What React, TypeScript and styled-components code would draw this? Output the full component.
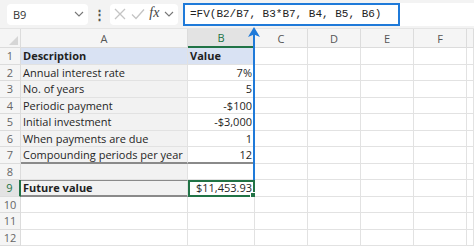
import React from 'react';
import styled, { createGlobalStyle } from 'styled-components';

const GlobalStyle = createGlobalStyle`
  html, body {
    margin: 0;
    padding: 0;
    background: #ffffff;
    width: 474px;
    height: 247px;
    overflow: hidden;
  }
`;

const columns = ['A', 'B', 'C', 'D', 'E', 'F', ''];

interface RowData {
  label: string;
  value: string;
}

const rows: RowData[] = [
  { label: 'Description', value: 'Value' },
  { label: 'Annual interest rate', value: '7%' },
  { label: 'No. of years', value: '5' },
  { label: 'Periodic payment', value: '-$100' },
  { label: 'Initial investment', value: '-$3,000' },
  { label: 'When payments are due', value: '1' },
  { label: 'Compounding periods per year', value: '12' },
  { label: '', value: '' },
  { label: 'Future value', value: '$11,453.93' },
  { label: '', value: '' },
  { label: '', value: '' },
  { label: '', value: '' },
];

const App: React.FC = () => {
  return (
    <Page>
      <GlobalStyle />
      <Toolbar>
        <NameBox>
          <span>B9</span>
          <Chevron />
        </NameBox>
        <Dots>⋮</Dots>
        <FuncBox>
          <svg width="12" height="12" viewBox="0 0 12 12">
            <path d="M1 1 L11 11 M11 1 L1 11" stroke="#c4c4c4" strokeWidth="1.3" fill="none" />
          </svg>
          <svg width="14" height="12" viewBox="0 0 14 12">
            <path d="M1 6.5 L5 10.5 L13 1.5" stroke="#c4c4c4" strokeWidth="1.3" fill="none" />
          </svg>
          <Fx>fx</Fx>
          <Chevron />
        </FuncBox>
        <FormulaArea>
          <FormulaBox>=FV(B2/B7, B3*B7, B4, B5, B6)</FormulaBox>
        </FormulaArea>
      </Toolbar>
      <Sheet>
        <Corner>
          <CornerMark />
        </Corner>
        {columns.map((c, i) => (
          <ColHeader key={i} selected={c === 'B'}>
            {c}
          </ColHeader>
        ))}
        {rows.map((r, i) => {
          const n = i + 1;
          const head = n === 1;
          const shaded = n >= 2 && n <= 9;
          const bottomRule = n === 7 || n === 9;
          const topRule = n === 9;
          return (
            <React.Fragment key={n}>
              <RowHeader selected={n === 9}>{n}</RowHeader>
              <Cell
                tone={head ? 'head' : shaded ? 'shade' : 'plain'}
                bold={head || n === 9}
                bottomRule={bottomRule}
                topRule={topRule}
              >
                {r.label}
              </Cell>
              <Cell
                tone={head ? 'head' : 'plain'}
                bold={head}
                alignRight={!head}
                bottomRule={bottomRule}
                topRule={topRule}
                active={n === 9}
              >
                {r.value}
                {n === 9 && <FillHandle />}
              </Cell>
              {columns.slice(2).map((c, k) => (
                <Cell key={k} tone="plain" />
              ))}
            </React.Fragment>
          );
        })}
        <Pointer>
          <svg width="12" height="10" viewBox="0 0 12 10">
            <path d="M6 0 L12 10 L6 7.5 L0 10 Z" fill="#1f7ad9" />
          </svg>
          <PointerLine />
        </Pointer>
      </Sheet>
    </Page>
  );
};

export default App;

const Chevron: React.FC = () => (
  <svg width="10" height="6" viewBox="0 0 10 6">
    <path d="M1 1 L5 5 L9 1" stroke="#777" strokeWidth="1.1" fill="none" />
  </svg>
);

const Page = styled.div`
  width: 474px;
  height: 247px;
  position: relative;
  overflow: hidden;
  font-family: 'Open Sans', 'Noto Sans', sans-serif;
  color: #1f1f1f;
`;

const Toolbar = styled.div`
  height: 29px;
  background: #f3f3f3;
  display: flex;
  align-items: center;
  padding-left: 7px;
  box-sizing: border-box;
  border-bottom: 1px solid #e4e4e4;
`;

const NameBox = styled.div`
  width: 81px;
  height: 21px;
  background: #fff;
  border-radius: 4px;
  display: flex;
  align-items: center;
  justify-content: space-between;
  padding: 0 4px 0 6px;
  box-sizing: border-box;
  font-size: 11px;
  color: #333;
`;

const Dots = styled.div`
  width: 22px;
  text-align: center;
  font-size: 13px;
  color: #555;
  font-weight: bold;
`;

const FuncBox = styled.div`
  width: 68px;
  height: 21px;
  background: #fff;
  border-radius: 4px;
  display: flex;
  align-items: center;
  justify-content: space-between;
  padding: 0 4px 0 4px;
  box-sizing: border-box;
`;

const Fx = styled.span`
  font-family: 'Liberation Serif', serif;
  font-style: italic;
  font-size: 14px;
  color: #444;
  margin-top: -2px;
`;

const FormulaArea = styled.div`
  flex: 1;
  margin-left: 5px;
  height: 23px;
  background: #fff;
  display: flex;
`;

const FormulaBox = styled.div`
  width: 217px;
  height: 23px;
  box-sizing: border-box;
  border: 2px solid #1f7ad9;
  font-family: 'Liberation Mono', monospace;
  font-size: 11px;
  line-height: 19px;
  padding-left: 5px;
  color: #222;
  white-space: pre;
`;

const Sheet = styled.div`
  position: relative;
  display: grid;
  grid-template-columns: 21px 167px 67px 53px 53px 53px 53px 1fr;
  grid-template-rows: 19px repeat(12, 16.5px);
  font-size: 11px;
`;

const Corner = styled.div`
  background: #f5f5f5;
  border-right: 1px solid #dcdcdc;
  border-bottom: 1px solid #dcdcdc;
  position: relative;
`;

const CornerMark = styled.div`
  position: absolute;
  right: 2px;
  bottom: 2px;
  width: 0;
  height: 0;
  border-left: 9px solid transparent;
  border-bottom: 9px solid #d6d6d6;
`;

const ColHeader = styled.div<{ selected?: boolean }>`
  background: ${(p) => (p.selected ? '#e3e3e3' : '#f5f5f5')};
  color: ${(p) => (p.selected ? '#217346' : '#555')};
  border-right: 1px solid #dcdcdc;
  border-bottom: ${(p) => (p.selected ? '2px solid #217346' : '1px solid #dcdcdc')};
  display: flex;
  align-items: center;
  justify-content: center;
  box-sizing: border-box;
`;

const RowHeader = styled.div<{ selected?: boolean }>`
  background: ${(p) => (p.selected ? '#e3e3e3' : '#f5f5f5')};
  color: ${(p) => (p.selected ? '#217346' : '#666')};
  border-right: ${(p) => (p.selected ? '2px solid #217346' : '1px solid #dcdcdc')};
  border-bottom: 1px solid #dcdcdc;
  display: flex;
  align-items: center;
  justify-content: center;
  box-sizing: border-box;
`;

const tones = {
  head: '#d9e2f3',
  shade: '#f2f2f2',
  plain: '#ffffff',
};

const Cell = styled.div<{
  tone: keyof typeof tones;
  bold?: boolean;
  alignRight?: boolean;
  bottomRule?: boolean;
  topRule?: boolean;
  active?: boolean;
}>`
  position: relative;
  background: ${(p) => tones[p.tone]};
  font-weight: ${(p) => (p.bold ? 700 : 400)};
  display: flex;
  align-items: center;
  justify-content: ${(p) => (p.alignRight ? 'flex-end' : 'flex-start')};
  padding: 0 2px;
  box-sizing: border-box;
  white-space: nowrap;
  border-right: 1px solid #e2e2e2;
  border-bottom: ${(p) => (p.bottomRule ? '2px solid #8a8a8a' : '1px solid #e2e2e2')};
  border-top: ${(p) => (p.topRule ? '1px solid #8a8a8a' : 'none')};
  ${(p) => (p.active ? 'outline: 2px solid #217346; outline-offset: -2px;' : '')}
`;

const FillHandle = styled.div`
  position: absolute;
  right: -3px;
  bottom: -4px;
  width: 5px;
  height: 5px;
  background: #217346;
  border: 1px solid #fff;
`;

const Pointer = styled.div`
  position: absolute;
  left: 248px;
  top: -2px;
  width: 12px;
  display: flex;
  flex-direction: column;
  align-items: center;
`;

const PointerLine = styled.div`
  width: 2px;
  height: 146px;
  margin-top: -3px;
  background: #1f7ad9;
`;
